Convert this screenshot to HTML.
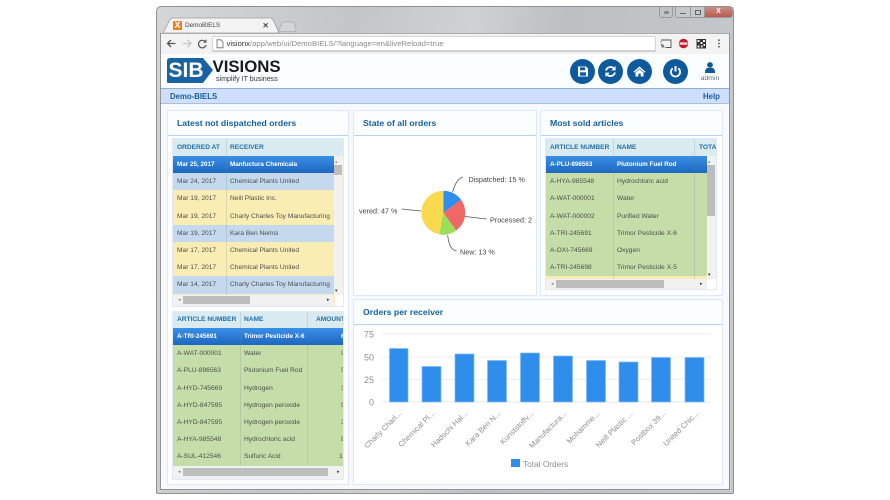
<!DOCTYPE html>
<html lang="en"><head><meta charset="utf-8"><title>DemoBIELS</title>
<style>
html,body{margin:0;padding:0;background:#fff}
body{width:890px;height:500px;position:relative;overflow:hidden;font-family:"Liberation Sans",sans-serif}
.a{position:absolute}
.panel{position:absolute;background:#fff;border:1px solid #dde8fb;box-sizing:border-box}
.ph{position:absolute;left:0;right:0;top:0;height:24px;background:#fbfeff;border-bottom:1px solid #b5d2f0;color:#155f9e;font-weight:bold;font-size:8.7px;line-height:25px;padding-left:9px}
.t{position:absolute;overflow:hidden;background:#fff;font-size:6.65px;color:#4e4e4e}
.h{position:absolute;left:0;top:0;height:17px;right:0;background:#d9ebf0;color:#1f6fa8;font-weight:bold;font-size:6.6px;line-height:17px}
.h span,.r span{position:absolute;white-space:nowrap}
.r{position:absolute;left:0;right:0;height:17.2px;line-height:17.2px}
.y{background:#f9edb3}.b{background:#c4d8ee}.g{background:#c5dda9}
.s{background:linear-gradient(#3a8fe6,#1d67c0);color:#fff;font-weight:bold;font-size:6.3px}
.d{position:absolute;top:0;bottom:0;width:1px;background:rgba(120,140,150,.22)}
.hs{position:absolute;left:0;background:#f1f1f1}
.th{position:absolute;background:#bdbdbd}
.vs{position:absolute;top:17px;background:#f1f1f1}
.btn{position:absolute;width:25px;height:25px;border-radius:50%;background:#0f5a9c;top:58.5px}
.btn svg{display:block}
</style></head><body>

<!-- window frame -->
<div class="a" style="left:156px;top:6px;width:578px;height:488px;background:#8e9092;border-radius:5px 5px 2px 2px"></div>
<div class="a" style="left:157px;top:7px;width:576px;height:486px;background:linear-gradient(100deg,#d4d6d7 0%,#c3c6c8 30%,#cfd1d2 48%,#bcc0c2 62%,#c8cbcd 100%);border-radius:4px 4px 1px 1px"></div>
<div class="a" style="left:160px;top:33px;width:570px;height:457px;background:#8f9496"></div>

<!-- tabs -->
<svg class="a" style="left:160px;top:15px" width="150" height="20">
<path d="M118 17.5 L122 8 Q122.5 7 124 7 H132 Q134 7 134.5 9 L136 14 Q136 16.5 134 16.5 H120Z" fill="#d3d6d8" stroke="#a9acae" stroke-width=".8"/>
<path d="M3 18 L10 4.5 Q11 3 13 3 H110 Q112 3 113 4.5 L119 18Z" fill="#f3f3f3" stroke="#9da0a2" stroke-width=".8"/>
</svg>
<div class="a" style="left:173px;top:21px;width:9px;height:9px;background:#ef7d22;overflow:hidden;color:#fff;font-weight:bold;font-size:9px;line-height:9.5px;text-align:center">X</div>
<div class="a" style="left:185px;top:20px;font-size:6.4px;line-height:11px;color:#444">DemoBIELS</div>
<div class="a" style="left:262.5px;top:20px;font-size:7.5px;line-height:11px;color:#444;font-weight:bold">✕</div>

<!-- window controls -->
<div class="a" style="left:659px;top:7px;width:14px;height:10.5px;background:#c0c3c5;border:1px solid #999;border-top:0;box-sizing:border-box;border-radius:0 0 3px 3px"></div>
<div class="a" style="left:675px;top:7px;width:16px;height:10.5px;background:#c6c9cb;border:1px solid #999;border-top:0;box-sizing:border-box;border-radius:0 0 0 3px"></div>
<div class="a" style="left:691px;top:7px;width:14px;height:10.5px;background:#c6c9cb;border:1px solid #999;border-top:0;border-left:0;box-sizing:border-box"></div>
<div class="a" style="left:705px;top:7px;width:28px;height:10.5px;background:linear-gradient(#c98d85,#bb5a4c);border:1px solid #999;border-top:0;border-left:0;box-sizing:border-box;border-radius:0 0 3px 0;color:#fff;font-size:7px;line-height:10px;text-align:center;font-weight:bold">X</div>
<div class="a" style="left:680px;top:12.5px;width:6px;height:1.5px;background:#666"></div>
<div class="a" style="left:694.5px;top:9.5px;width:6px;height:5px;border:1px solid #666;box-sizing:border-box"></div>
<div class="a" style="left:663.5px;top:10.5px;width:5px;height:3.5px;background:#888;border-radius:1px"></div>

<!-- toolbar -->
<div class="a" style="left:161px;top:33px;width:568px;height:21px;background:#f3f3f3;border-top:1px solid #a9abad;box-sizing:border-box"></div>
<svg class="a" style="left:165px;top:36px" width="50" height="16" fill="none">
<path d="M10.5 7.5H2.5M6 4L2.5 7.5 6 11" stroke="#555" stroke-width="1.3"/>
<path d="M26 7.5H18M22.5 4L26 7.5 22.5 11" stroke="#c4c4c4" stroke-width="1.3"/>
<path d="M40.5 6A3.8 3.8 0 1 0 41 9" stroke="#555" stroke-width="1.2"/><path d="M41.5 3.2V6.6H38Z" fill="#555"/>
</svg>
<div class="a" style="left:212px;top:36px;width:444px;height:15px;background:#fff;border:1px solid #d4d4d4;box-sizing:border-box;border-radius:2px;box-shadow:0 1px 0 #ccc"></div>
<svg class="a" style="left:216px;top:39px" width="8" height="10" fill="none"><path d="M1 .8H4.8L7 3V8.8H1Z" stroke="#666" stroke-width=".8"/></svg>
<div class="a" style="left:226.5px;top:38px;font-size:7.7px;line-height:11px;color:#8b8b8b;white-space:nowrap"><span style="color:#333">visionx</span>/app/web/ui/DemoBIELS/?language=en&amp;liveReload=true</div>
<svg class="a" style="left:658px;top:37px" width="70" height="14" fill="none">
<path d="M3 3H13V10.5H7.5M3 5.5V4M3 7.5A3 3 0 0 1 6 10.5M3 9A1.5 1.5 0 0 1 4.5 10.5" stroke="#555" stroke-width=".9"/>
<circle cx="25.5" cy="6.5" r="4.7" fill="#c8182b"/>
<rect x="21.5" y="5.3" width="8" height="2.5" fill="#f3cfd3"/>
<rect x="38.5" y="2" width="9.5" height="9.5" fill="#333"/>
<path d="M39.5 3H41.5V5H39.5ZM45 3H47V5H45ZM39.5 8.5H41.5V10.5H39.5ZM42.5 5H44.5V7H42.5ZM45.5 7H47V9H45.5ZM43 8.5H44.5V10.5H43Z" fill="#f3f3f3"/>
<circle cx="61" cy="3.2" r=".9" fill="#555"/><circle cx="61" cy="6.5" r=".9" fill="#555"/><circle cx="61" cy="9.8" r=".9" fill="#555"/>
</svg>

<!-- app header -->
<div class="a" style="left:161px;top:54px;width:568px;height:35px;background:#fbfeff"></div>
<svg class="a" style="left:166px;top:57px" width="50" height="27"><path d="M4 1H37L47 13 37 26H2Q1 26 1 25V4Q1 1 4 1Z" fill="#1a63a3"/></svg>
<div class="a" style="left:168.5px;top:58px;font-size:21px;line-height:25px;font-weight:bold;color:#fff;white-space:nowrap">SIB</div>
<div class="a" style="left:212.5px;top:57px;font-size:16.8px;line-height:19px;font-weight:bold;color:#1a1a1a;white-space:nowrap">VISIONS</div>
<div class="a" style="left:216px;top:73.5px;font-size:7.1px;line-height:10px;color:#333;white-space:nowrap">simplify IT business</div>

<div class="btn" style="left:569.5px"><svg width="25" height="25"><path d="M8 7.5H16L18 9.5V17.5H8Z" fill="#fff"/><rect x="10" y="8.3" width="5" height="3" fill="#0f5a9c"/><rect x="10" y="13.3" width="6" height="3.4" fill="#0f5a9c"/></svg></div>
<div class="btn" style="left:598.2px"><svg width="25" height="25" fill="none"><path d="M8 11.5A4.8 4.8 0 0 1 16.2 9.6" stroke="#fff" stroke-width="1.8"/><path d="M17.6 7V11.4H13.3Z" fill="#fff"/><path d="M17 13.5A4.8 4.8 0 0 1 8.8 15.4" stroke="#fff" stroke-width="1.8"/><path d="M7.4 18V13.6H11.7Z" fill="#fff"/></svg></div>
<div class="btn" style="left:626.5px"><svg width="25" height="25"><path d="M12.5 7.5L18.5 12.7 17.6 13.6 12.5 9.5 7.4 13.6 6.5 12.7Z" fill="#fff"/><path d="M8.5 13.5L12.5 10.3 16.5 13.5V17.5H13.7V14.7H11.3V17.5H8.5Z" fill="#fff"/></svg></div>
<div class="btn" style="left:663.2px"><svg width="25" height="25" fill="none"><path d="M9.7 9.3A4.6 4.6 0 1 0 15.3 9.3" stroke="#fff" stroke-width="1.8"/><path d="M12.5 7V12.5" stroke="#fff" stroke-width="2"/></svg></div>
<svg class="a" style="left:704px;top:62px" width="12" height="11"><circle cx="6" cy="3" r="2.9" fill="#0f5a9c"/><path d="M1 11Q.8 6.5 3.5 6H8.5Q11.2 6.5 11 11Z" fill="#0f5a9c"/></svg>
<div class="a" style="left:692px;top:74px;width:36px;text-align:center;font-size:6.8px;line-height:10px;color:#5a6f80">admin</div>

<!-- menu bar -->
<div class="a" style="left:161px;top:88px;width:568px;height:16px;background:#cfdffb;border-top:1px solid #8fb0d2;border-bottom:1px solid #a5c2e3;box-sizing:border-box"></div>
<div class="a" style="left:170px;top:90.5px;font-size:7.8px;line-height:11px;font-weight:bold;color:#155f9e">Demo-BIELS</div>
<div class="a" style="left:703px;top:90.5px;font-size:7.8px;line-height:11px;font-weight:bold;color:#155f9e">Help</div>

<!-- content -->
<div class="a" style="left:161px;top:104px;width:568px;height:385px;background:#f7f9fc"></div>

<div class="panel" style="left:167px;top:110px;width:182px;height:375px"><div class="ph">Latest not dispatched orders</div></div>
<div class="panel" style="left:353px;top:110px;width:184px;height:186px"><div class="ph">State of all orders</div></div>
<div class="panel" style="left:540px;top:110px;width:183px;height:186px"><div class="ph">Most sold articles</div></div>
<div class="panel" style="left:353px;top:299px;width:370px;height:186px"><div class="ph">Orders per receiver</div></div>

<!-- table 1 -->
<div class="t" style="left:173px;top:139px;width:170px;height:167px;outline:1px solid #dfe9f8">
<div class="h"><span style="left:4px">ORDERED AT</span><span style="left:57px">RECEIVER</span></div>
<div class="r s" style="top:17px;right:8px"><span style="left:4px">Mar 25, 2017</span><span style="left:57px">Manfuctura Chemicala</span></div>
<div class="r b" style="top:34.2px;right:8px"><span style="left:4px">Mar 24, 2017</span><span style="left:57px">Chemical Plants United</span></div>
<div class="r y" style="top:51.4px;right:8px"><span style="left:4px">Mar 19, 2017</span><span style="left:57px">Neill Plastic Inc.</span></div>
<div class="r y" style="top:68.6px;right:8px"><span style="left:4px">Mar 19, 2017</span><span style="left:57px">Charly Charles Toy Manufacturing</span></div>
<div class="r b" style="top:85.8px;right:8px"><span style="left:4px">Mar 19, 2017</span><span style="left:57px">Kara Ben Nemsi</span></div>
<div class="r y" style="top:103px;right:8px"><span style="left:4px">Mar 17, 2017</span><span style="left:57px">Chemical Plants United</span></div>
<div class="r y" style="top:120.2px;right:8px"><span style="left:4px">Mar 17, 2017</span><span style="left:57px">Chemical Plants United</span></div>
<div class="r b" style="top:137.4px;right:8px"><span style="left:4px">Mar 14, 2017</span><span style="left:57px">Charly Charles Toy Manufacturing</span></div>
<div class="r y" style="top:154.6px;right:8px"></div>
<div class="d" style="left:53px;bottom:11px"></div>
<div class="vs" style="left:161px;width:9px;height:139px"></div>
<div class="th" style="left:161px;top:26px;width:8px;height:10px"></div>
<div class="hs" style="top:156px;right:9px;height:11px"></div>
<div class="th" style="left:10px;top:157px;width:67px;height:8px"></div>
<div class="a" style="left:5px;top:158px;font-size:5px;line-height:6px;color:#888">◂</div>
<div class="a" style="left:154px;top:158px;font-size:5px;line-height:6px;color:#333">▸</div>
<div class="a" style="left:162px;top:149px;font-size:5px;line-height:6px;color:#333">▾</div>
<div class="a" style="left:162px;top:20px;font-size:5px;line-height:6px;color:#999">▴</div>
</div>

<!-- table 2 -->
<div class="t" style="left:173px;top:312px;width:170px;height:167px;outline:1px solid #dfe9f8">
<div class="h" style="height:16px;line-height:16px"><span style="left:4px">ARTICLE NUMBER</span><span style="left:71px">NAME</span><span style="left:143px">AMOUNT</span></div>
<div class="r s" style="top:16px"><span style="left:4px">A-TRI-245691</span><span style="left:71px">Trimor Pesticide X-6</span><span style="left:168px">6</span></div>
<div class="r g" style="top:33.2px"><span style="left:4px">A-WAT-000001</span><span style="left:71px">Water</span><span style="left:168px">9</span></div>
<div class="r g" style="top:50.4px"><span style="left:4px">A-PLU-896563</span><span style="left:71px">Plutonium Fuel Rod</span><span style="left:168px">5</span></div>
<div class="r g" style="top:67.6px"><span style="left:4px">A-HYD-745669</span><span style="left:71px">Hydrogen</span><span style="left:168px">3</span></div>
<div class="r g" style="top:84.8px"><span style="left:4px">A-HYD-847595</span><span style="left:71px">Hydrogen peroxide</span><span style="left:168px">9</span></div>
<div class="r g" style="top:102px"><span style="left:4px">A-HYD-847595</span><span style="left:71px">Hydrogen peroxide</span><span style="left:168px">3</span></div>
<div class="r g" style="top:119.2px"><span style="left:4px">A-HYA-985548</span><span style="left:71px">Hydrochloric acid</span><span style="left:168px">8</span></div>
<div class="r g" style="top:136.4px"><span style="left:4px">A-SUL-412546</span><span style="left:71px">Sulfuric Acid</span><span style="left:166px">11</span></div>
<div class="d" style="left:67px;bottom:13px"></div><div class="d" style="left:134px;bottom:13px"></div>
<div class="hs" style="top:154px;right:0;height:13px"></div>
<div class="th" style="left:10px;top:156px;width:145px;height:8px"></div>
<div class="a" style="left:5px;top:157px;font-size:5px;line-height:6px;color:#888">◂</div>
<div class="a" style="left:164px;top:157px;font-size:5px;line-height:6px;color:#333">▸</div>
</div>

<!-- table 3 -->
<div class="t" style="left:546px;top:139px;width:170px;height:150px;outline:1px solid #dfe9f8">
<div class="h"><span style="left:4px">ARTICLE NUMBER</span><span style="left:71px">NAME</span><span style="left:153px">TOTAL</span></div>
<div class="r s" style="top:17px;right:9px"><span style="left:4px">A-PLU-896563</span><span style="left:71px">Plutonium Fuel Rod</span></div>
<div class="r g" style="top:34.2px;right:9px"><span style="left:4px">A-HYA-985548</span><span style="left:71px">Hydrochloric acid</span></div>
<div class="r g" style="top:51.4px;right:9px"><span style="left:4px">A-WAT-000001</span><span style="left:71px">Water</span></div>
<div class="r g" style="top:68.6px;right:9px"><span style="left:4px">A-WAT-000002</span><span style="left:71px">Purified Water</span></div>
<div class="r g" style="top:85.8px;right:9px"><span style="left:4px">A-TRI-245691</span><span style="left:71px">Trimor Pesticide X-6</span></div>
<div class="r g" style="top:103px;right:9px"><span style="left:4px">A-OXI-745669</span><span style="left:71px">Oxygen</span></div>
<div class="r g" style="top:120.2px;right:9px"><span style="left:4px">A-TRI-245698</span><span style="left:71px">Trimor Pesticide X-5</span></div>
<div class="r y" style="top:137.4px;right:9px"></div>
<div class="d" style="left:67px;bottom:10px"></div><div class="d" style="left:148px;bottom:10px"></div>
<div class="vs" style="left:161px;width:9px;height:123px"></div>
<div class="th" style="left:161px;top:26px;width:8px;height:51px"></div>
<div class="hs" style="top:140px;right:9px;height:10px"></div>
<div class="th" style="left:10px;top:141px;width:108px;height:8px"></div>
<div class="a" style="left:5px;top:142px;font-size:5px;line-height:6px;color:#888">◂</div>
<div class="a" style="left:154px;top:142px;font-size:5px;line-height:6px;color:#333">▸</div>
<div class="a" style="left:162px;top:133px;font-size:5px;line-height:6px;color:#333">▾</div>
<div class="a" style="left:162px;top:20px;font-size:5px;line-height:6px;color:#999">▴</div>
</div>

<!-- charts -->
<svg class="a" style="left:0;top:0" width="890" height="500" font-family="Liberation Sans, sans-serif">
<g fill="none" stroke="#555" stroke-width=".8">
<path d="M452.7 192Q456 179 463 177"/>
<path d="M465 216.5L486.7 219"/>
<path d="M447.7 235Q449 250 456.7 251"/>
<path d="M401.7 209L421 211"/>
</g>
<path d="M443.3 212.7V190.7A22 22 0 0 1 461.1 199.8Z" fill="#2f8dec"/>
<path d="M443.3 212.7L461.1 199.8A22 22 0 0 1 456.2 230.5Z" fill="#ef6767"/>
<path d="M443.3 212.7L456.2 230.5A22 22 0 0 1 439.2 234.3Z" fill="#9ade5a"/>
<path d="M443.3 212.7L439.2 234.3A22 22 0 0 1 443.3 190.7Z" fill="#f9da4e"/>
<g font-size="7.2" fill="#444">
<text x="468.5" y="182">Dispatched: 15 %</text>
<text x="490" y="222.5">Processed: 2</text>
<text x="460" y="254.5">New: 13 %</text>
<text x="359" y="213.5">vered: 47 %</text>
</g>

<g stroke="#f0f0f0" stroke-width="1.2"><path d="M382 334H711M382 357H711M382 379.5H711"/></g>
<path d="M382 402H711" stroke="#e8e8e8" stroke-width="1"/>
<g font-size="9" fill="#8f8f8f" text-anchor="end"><text x="374" y="337.5">75</text><text x="374" y="360.5">50</text><text x="374" y="383">25</text><text x="374" y="405.5">0</text></g>
<g fill="#2f8dec" stroke="#82bbf5" stroke-width=".7">
<rect x="389.5" y="348.5" width="18.5" height="53.5"/>
<rect x="422" y="366.5" width="19" height="35.5"/>
<rect x="455" y="354" width="19" height="48"/>
<rect x="487.5" y="360.5" width="19" height="41.5"/>
<rect x="520.5" y="353" width="19" height="49"/>
<rect x="553.5" y="356" width="19" height="46"/>
<rect x="586.5" y="360.5" width="19" height="41.5"/>
<rect x="619" y="362" width="19" height="40"/>
<rect x="651.5" y="357.5" width="19" height="44.5"/>
<rect x="685" y="357.5" width="19" height="44.5"/>
</g>
<g font-size="7.7" fill="#8f8f8f" text-anchor="end">
<text transform="translate(402 414) rotate(-45)">Charly Charl...</text>
<text transform="translate(435 414) rotate(-45)">Chemical Pl...</text>
<text transform="translate(468 414) rotate(-45)">Hadschi Hal...</text>
<text transform="translate(501 414) rotate(-45)">Kara Ben N...</text>
<text transform="translate(534 414) rotate(-45)">Kunststoffv...</text>
<text transform="translate(567 414) rotate(-45)">Manufactura...</text>
<text transform="translate(600 414) rotate(-45)">Mohamme...</text>
<text transform="translate(633 414) rotate(-45)">Neill Plastic ...</text>
<text transform="translate(666 414) rotate(-45)">Postbox 39...</text>
<text transform="translate(699 414) rotate(-45)">United Chic...</text>
</g>
<rect x="511" y="459" width="9" height="8" fill="#2f8dec"/>
<text x="523" y="467" font-size="8.3" fill="#8f8f8f">Total Orders</text>
</svg>
</body></html>
